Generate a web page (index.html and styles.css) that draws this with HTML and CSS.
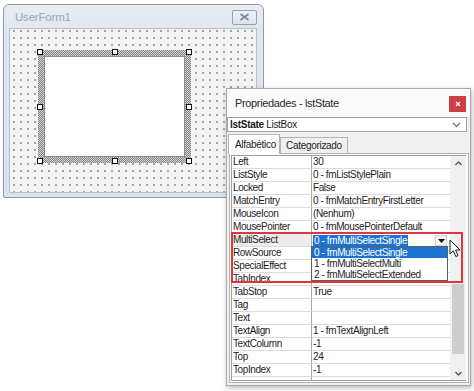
FILE: index.html
```html
<!DOCTYPE html>
<html lang="pt">
<head>
    <meta charset="UTF-8">
    <title>UserForm1 - Propriedades</title>
    <link rel="stylesheet" href="styles.css">
</head>
<body>
    <div class="desk">

        <!-- form designer window -->
        <div class="uf-window">
            <div class="uf-title">
                <span class="uf-caption">UserForm1</span>
                <span class="uf-close">
                    <svg width="11" height="8" viewBox="0 0 11 8"><path d="M1.5 1 L9.5 7 M9.5 1 L1.5 7" stroke="#7c8794" stroke-width="1.6" fill="none"/></svg>
                </span>
            </div>
            <div class="uf-client">
                <div class="lb-frame">
                    <div class="lb-box"></div>
                    <span class="handle h-tl"></span>
                    <span class="handle h-tm"></span>
                    <span class="handle h-tr"></span>
                    <span class="handle h-ml"></span>
                    <span class="handle h-mr"></span>
                    <span class="handle h-bl"></span>
                    <span class="handle h-bm"></span>
                    <span class="handle h-br"></span>
                </div>
            </div>
        </div>

        <!-- properties window -->
        <div class="props">
            <div class="props-title">
                <span>Propriedades - lstState</span>
                <span class="props-close">
                    <svg width="6" height="6" viewBox="0 0 6 6"><path d="M1 1 L5 5 M5 1 L1 5" stroke="#fff" stroke-width="1.2" fill="none"/></svg>
                </span>
            </div>
            <div class="obj-combo">
                <span><b>lstState</b> ListBox</span>
                <svg width="9" height="6" viewBox="0 0 9 6"><path d="M1 1 L4.5 4.5 L8 1" stroke="#666" stroke-width="1.1" fill="none"/></svg>
            </div>
            <div class="tabs">
                <span class="tab active">Alfabético</span>
                <span class="tab">Categorizado</span>
            </div>
            <div class="panel">
                <div class="prop-list">
                    <div class="pname">Left</div><div class="pval">30</div>
                    <div class="pname">ListStyle</div><div class="pval">0 - fmListStylePlain</div>
                    <div class="pname">Locked</div><div class="pval">False</div>
                    <div class="pname">MatchEntry</div><div class="pval">0 - fmMatchEntryFirstLetter</div>
                    <div class="pname">MouseIcon</div><div class="pval">(Nenhum)</div>
                    <div class="pname">MousePointer</div><div class="pval">0 - fmMousePointerDefault</div>
                    <div class="pname current">MultiSelect</div>
                    <div class="pval editing">
                        <span class="sel-text">0 - fmMultiSelectSingle</span>
                        <span class="drop-btn">
                            <svg width="7" height="4" viewBox="0 0 7 4"><path d="M0 0 H7 L3.5 4 Z" fill="#111"/></svg>
                        </span>
                        <div class="drop-list">
                            <div class="drop-item on">0 - fmMultiSelectSingle</div>
                            <div class="drop-item">1 - fmMultiSelectMulti</div>
                            <div class="drop-item">2 - fmMultiSelectExtended</div>
                        </div>
                    </div>
                    <div class="pname">RowSource</div><div class="pval"></div>
                    <div class="pname">SpecialEffect</div><div class="pval"></div>
                    <div class="pname">TabIndex</div><div class="pval"></div>
                    <div class="pname">TabStop</div><div class="pval">True</div>
                    <div class="pname">Tag</div><div class="pval"></div>
                    <div class="pname">Text</div><div class="pval"></div>
                    <div class="pname">TextAlign</div><div class="pval">1 - fmTextAlignLeft</div>
                    <div class="pname">TextColumn</div><div class="pval">-1</div>
                    <div class="pname">Top</div><div class="pval">24</div>
                    <div class="pname">TopIndex</div><div class="pval">-1</div>
                    <div class="pname"></div><div class="pval"></div>
                </div>
                <div class="vscroll">
                    <span class="arrow">
                        <svg width="7" height="5" viewBox="0 0 7 5"><path d="M0.5 4 L3.5 1 L6.5 4" stroke="#555" stroke-width="1.3" fill="none"/></svg>
                    </span>
                    <div class="track"><span class="thumb"></span></div>
                    <span class="arrow">
                        <svg width="7" height="5" viewBox="0 0 7 5"><path d="M0.5 1 L3.5 4 L6.5 1" stroke="#555" stroke-width="1.3" fill="none"/></svg>
                    </span>
                </div>
            </div>

            <!-- annotation over the MultiSelect row -->
            <div class="highlight"></div>
            <svg class="cursor" width="12" height="19" viewBox="0 0 12 19">
                <path d="M1 1 L1 15 L4.3 11.8 L6.8 17.5 L9 16.6 L6.6 11 L11 11 Z" fill="#fff" stroke="#222" stroke-width="1"/>
            </svg>
        </div>
    </div>
</body>
</html>
```

FILE: styles.css
```css
/* Base */
* {
  margin: 0;
  padding: 0;
  box-sizing: border-box;
}

body {
  background: #fff;
  font-family: "Liberation Sans", Arial, sans-serif;
  color: #222;
  overflow: hidden;
}

.desk {
  position: relative;
  width: 474px;
  height: 391px;
}

/* ---------- UserForm designer window ---------- */
.uf-window {
  position: absolute;
  left: 3px;
  top: 4px;
  width: 261px;
  height: 194px;
  border: 1px solid #8d9aab;
  border-radius: 6px 6px 2px 2px;
  background: linear-gradient(#e9eef4, #dde5ee 30px, #dbe4ee);
  padding: 0 6px 4px 5px;
  display: flex;
  flex-direction: column;
}

.uf-title {
  height: 23px;
  display: flex;
  align-items: center;
  justify-content: space-between;
  padding-left: 6px;
}

.uf-caption {
  font-size: 11.5px;
  color: #9ba6b2;
  letter-spacing: -0.2px;
}

.uf-close {
  width: 25px;
  height: 15px;
  margin-top: 1px;
  border: 1px solid #93a1b2;
  border-radius: 2px;
  background: linear-gradient(#eef2f7, #dde4ec);
  display: flex;
  align-items: center;
  justify-content: center;
}

.uf-client {
  flex: 1;
  border: 1px solid #b4c0cd;
  background-color: #f4f4f4;
  background-image: radial-gradient(circle at 1px 1px, #8a8a8a 0.6px, transparent 1px);
  background-size: 7px 7px;
  background-position: 3px 1px;
  padding: 21px 0 0 28px;
}

/* selected listbox on the canvas */
.lb-frame {
  position: relative;
  width: 153px;
  height: 113px;
  padding: 6px;
  background: repeating-conic-gradient(#838383 0 25%, #d4d4d4 0 50%) 0 0 / 2px 2px;
}

.lb-box {
  width: 100%;
  height: 100%;
  background: #fff;
  border: 1px solid #8c8c8c;
}

.handle {
  position: absolute;
  width: 6px;
  height: 6px;
  background: #fff;
  border: 1px solid #111;
}

.h-tl { left: -1px; top: -1px; }
.h-tm { left: calc(50% - 3px); top: -1px; }
.h-tr { right: -1px; top: -1px; }
.h-ml { left: -1px; top: calc(50% - 3px); }
.h-mr { right: -1px; top: calc(50% - 3px); }
.h-bl { left: -1px; bottom: -1px; }
.h-bm { left: calc(50% - 3px); bottom: -1px; }
.h-br { right: -1px; bottom: -1px; }

/* ---------- Properties window ---------- */
.props {
  position: absolute;
  left: 226px;
  top: 88px;
  width: 245px;
  height: 298px;
  background: #f0f0f0;
  border: 1px solid #a9a9a9;
  box-shadow: 1px 2px 5px rgba(0, 0, 0, 0.28);
  display: flex;
  flex-direction: column;
}

.props-title {
  height: 28px;
  background: #fbfbfb;
  display: flex;
  align-items: center;
  justify-content: space-between;
  padding: 0 4px 0 8px;
  font-size: 11px;
  letter-spacing: -0.35px;
  color: #2a2a2a;
}

.props-close {
  width: 17px;
  height: 16px;
  background: #cc3f44;
  display: flex;
  align-items: center;
  justify-content: center;
  margin-top: 2px;
}

.obj-combo {
  height: 15px;
  margin: 0 3px 0 0;
  background: #fff;
  border: 1px solid #a3a3a3;
  display: flex;
  align-items: center;
  justify-content: space-between;
  padding: 0 5px 0 2px;
  font-size: 10px;
  letter-spacing: -0.3px;
  color: #1a1a1a;
}

.obj-combo b {
  font-weight: bold;
}

.tabs {
  height: 21px;
  display: flex;
  align-items: flex-end;
  padding-left: 1px;
  font-size: 10px;
  letter-spacing: -0.3px;
}

.tab {
  height: 16px;
  padding: 2px 5px 0 5px;
  border: 1px solid #b3b3b3;
  border-bottom: none;
  background: #f0f0f0;
  color: #222;
}

.tab.active {
  height: 20px;
  width: 52px;
  padding: 4px 0 0 6px;
  background: #fff;
  margin-bottom: -1px;
  position: relative;
}

.panel {
  flex: 1;
  margin: 0 1px 2px 2px;
  background: #fff;
  border: 1px solid #b3b3b3;
  padding: 1px 2px 2px 1px;
  display: flex;
  overflow: hidden;
}

.prop-list {
  width: 219px;
  height: 226px;
  border: 1px solid #a0a0a0;
  border-right: none;
  display: grid;
  grid-template-columns: 80px 138px;
  grid-auto-rows: 13px;
  overflow: hidden;
  font-size: 10px;
  letter-spacing: -0.4px;
  line-height: 12px;
  color: #1e1e1e;
}

.pname,
.pval {
  border-bottom: 1px solid #dcdcdc;
  padding-left: 1px;
  white-space: nowrap;
  overflow: hidden;
}

.pname {
  border-right: 1px solid #a8a8a8;
}

.pname.current {
  background: #ececec;
}

.pval.editing {
  position: relative;
  overflow: visible;
  z-index: 2;
  background: #fff;
}

.sel-text {
  display: inline-block;
  background: #1c74d2;
  color: #fff;
  padding: 0 1px;
  line-height: 11px;
  margin-top: 1px;
}

.drop-btn {
  position: absolute;
  right: 3px;
  top: 1px;
  width: 12px;
  height: 11px;
  border: 1px solid #d0d0d0;
  background: #f4f4f4;
  display: flex;
  align-items: center;
  justify-content: center;
}

.drop-list {
  position: absolute;
  left: -1px;
  top: 12px;
  width: 137px;
  background: #fff;
  border: 1px solid #5f5f5f;
}

.drop-item {
  height: 11px;
  line-height: 11px;
  padding-left: 2px;
  color: #1e1e1e;
}

.drop-item.on {
  background: #1c74d2;
  color: #fff;
}

/* scrollbar */
.vscroll {
  width: 16px;
  height: 226px;
  background: #f0f0f0;
  display: flex;
  flex-direction: column;
  border-top: 1px solid #a0a0a0;
  border-bottom: 1px solid #a0a0a0;
}

.arrow {
  height: 14px;
  display: flex;
  align-items: center;
  justify-content: center;
}

.track {
  flex: 1;
  display: flex;
  flex-direction: column;
  justify-content: flex-end;
  padding: 0 2px 12px 2px;
}

.thumb {
  height: 70px;
  background: #cdcdcd;
}

/* red annotation box + mouse pointer */
.highlight {
  position: absolute;
  left: 4px;
  top: 143px;
  width: 232px;
  height: 51px;
  border: 2px solid #e2343a;
  z-index: 3;
}

.cursor {
  position: absolute;
  left: 222px;
  top: 150px;
  z-index: 4;
}
```
